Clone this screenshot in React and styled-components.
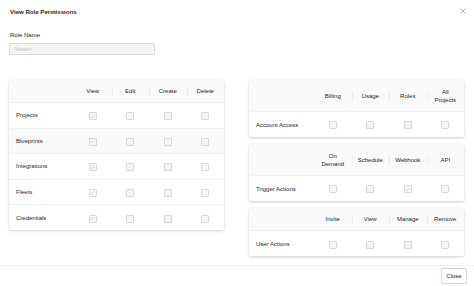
import React from 'react'
import styled, { createGlobalStyle } from 'styled-components'

const GlobalStyle = createGlobalStyle`
  html, body {
    margin: 0;
    padding: 0;
    background: #fff;
  }
  body {
    font-family: "Liberation Sans", Arial, sans-serif;
    color: #262626;
  }
`

const Modal = styled.div`
  width: 474px;
  height: 286px;
  display: flex;
  flex-direction: column;
  background: #fff;
`
const Header = styled.div`
  height: 22px;
  padding: 0 8px 0 10px;
  display: flex;
  align-items: center;
  justify-content: space-between;
`
const Title = styled.div`
  font-size: 6.1px;
  font-weight: 700;
  color: #262626;
`
const CloseIcon = styled.svg`
  width: 6px;
  height: 6px;
  stroke: #8c8c8c;
  stroke-width: 1;
`
const Body = styled.div`
  flex: 1;
  padding: 9px 9px 0 9px;
`
const Label = styled.div`
  font-size: 6px;
  line-height: 8px;
  padding-left: 1px;
  color: #262626;
`
const Input = styled.div`
  margin-top: 4px;
  width: 139px;
  height: 10px;
  border: 1px solid #d9d9d9;
  border-radius: 1px;
  background: #f5f5f5;
  font-size: 5.5px;
  line-height: 10px;
  padding-left: 5px;
  color: #bfbfbf;
  box-sizing: content-box;
`
const Grid = styled.div`
  margin-top: 25px;
  display: grid;
  grid-template-columns: 215px 215px;
  column-gap: 25px;
  align-items: start;
`
const Stack = styled.div`
  display: flex;
  flex-direction: column;
  gap: 7px;
`
const Card = styled.div`
  border-radius: 2px;
  box-shadow: 0 1px 3px rgba(0, 0, 0, 0.18), 0 0 1px rgba(0, 0, 0, 0.08);
  overflow: hidden;
  background: #fff;
`
const Table = styled.table`
  width: 100%;
  table-layout: fixed;
  border-collapse: collapse;
`
const Th = styled.th`
  position: relative;
  background: #fafafa;
  font-size: 6px;
  font-weight: 400;
  line-height: 8px;
  color: #262626;
  text-align: center;
  padding: ${p => (p.$tall ? '7.5px 2px' : '7px 2px')};
  width: ${p => (p.$first ? '61px' : 'auto')};
  border-bottom: 1px solid #f0f0f0;

  & + &::before {
    content: '';
    position: absolute;
    left: 0;
    top: 50%;
    width: 1px;
    height: 9px;
    transform: translateY(-50%);
    background: rgba(0, 0, 0, 0.06);
  }
`
const Row = styled.tr`
  height: 25.6px;
  background: ${p => (p.$hover ? '#fafafa' : '#fff')};
  &:not(:last-child) td {
    border-bottom: 1px solid #f0f0f0;
  }
`
const Td = styled.td`
  font-size: 6px;
  line-height: 8px;
  padding: 0 2px 0 7px;
  text-align: left;
  vertical-align: middle;
  white-space: nowrap;
`
const BoxCell = styled.td`
  padding: 0;
  text-align: center;
  vertical-align: middle;
`
const Box = styled.span`
  display: inline-flex;
  align-items: center;
  justify-content: center;
  width: 6px;
  height: 6px;
  border: 1px solid #d9d9d9;
  border-radius: 1px;
  background: #f5f5f5;
  vertical-align: middle;
`
const Tick = styled.svg`
  width: 5px;
  height: 5px;
  fill: none;
  stroke: #bfbfbf;
  stroke-width: 1.2;
`
const Footer = styled.div`
  height: 21px;
  border-top: 1px solid #f0f0f0;
  display: flex;
  align-items: center;
  justify-content: flex-end;
  padding: 0 7px;
  box-sizing: border-box;
`
const Button = styled.button`
  height: 16px;
  width: 26px;
  padding: 0;
  border: 1px solid #d9d9d9;
  border-radius: 2px;
  background: #fff;
  font-family: inherit;
  font-size: 6px;
  color: #262626;
  box-shadow: 0 1px 0 rgba(0, 0, 0, 0.02);
`

const Check = ({ checked }) => (
  <Box>
    {checked && (
      <Tick viewBox="0 0 10 10">
        <path d="M2 5.2 L4.2 7.3 L8 2.8" />
      </Tick>
    )}
  </Box>
)

const PermTable = ({ columns, rows, tall, hoverRow }) => (
  <Card>
    <Table>
      <thead>
        <tr>
          <Th $first $tall={tall}></Th>
          {columns.map((c, i) => (
            <Th key={i} $tall={tall}>{c}</Th>
          ))}
        </tr>
      </thead>
      <tbody>
        {rows.map(r => (
          <Row key={r.name} $hover={r.name === hoverRow}>
            <Td>{r.name}</Td>
            {r.values.map((v, i) => (
              <BoxCell key={i}><Check checked={v} /></BoxCell>
            ))}
          </Row>
        ))}
      </tbody>
    </Table>
  </Card>
)

const mainRows = ['Projects', 'Blueprints', 'Integrations', 'Fleets', 'Credentials'].map(name => ({
  name,
  values: [true, false, false, false],
}))

export default function App() {
  return (
    <Modal>
      <GlobalStyle />
      <Header>
        <Title>View Role Permissions</Title>
        <CloseIcon viewBox="0 0 10 10">
          <path d="M1 1 L9 9 M9 1 L1 9" />
        </CloseIcon>
      </Header>
      <Body>
        <Label>Role Name</Label>
        <Input>Viewer</Input>
        <Grid>
          <PermTable
            columns={['View', 'Edit', 'Create', 'Delete']}
            rows={mainRows}
            hoverRow="Blueprints"
          />
          <Stack>
            <PermTable
              tall
              columns={['Billing', 'Usage', 'Roles', <>All<br />Projects</>]}
              rows={[{ name: 'Account Access', values: [false, false, false, false] }]}
            />
            <PermTable
              tall
              columns={[<>On<br />Demand</>, 'Schedule', 'Webhook', 'API']}
              rows={[{ name: 'Trigger Actions', values: [false, false, true, false] }]}
            />
            <PermTable
              columns={['Invite', 'View', 'Manage', 'Remove']}
              rows={[{ name: 'User Actions', values: [false, false, false, false] }]}
            />
          </Stack>
        </Grid>
      </Body>
      <Footer>
        <Button>Close</Button>
      </Footer>
    </Modal>
  )
}
